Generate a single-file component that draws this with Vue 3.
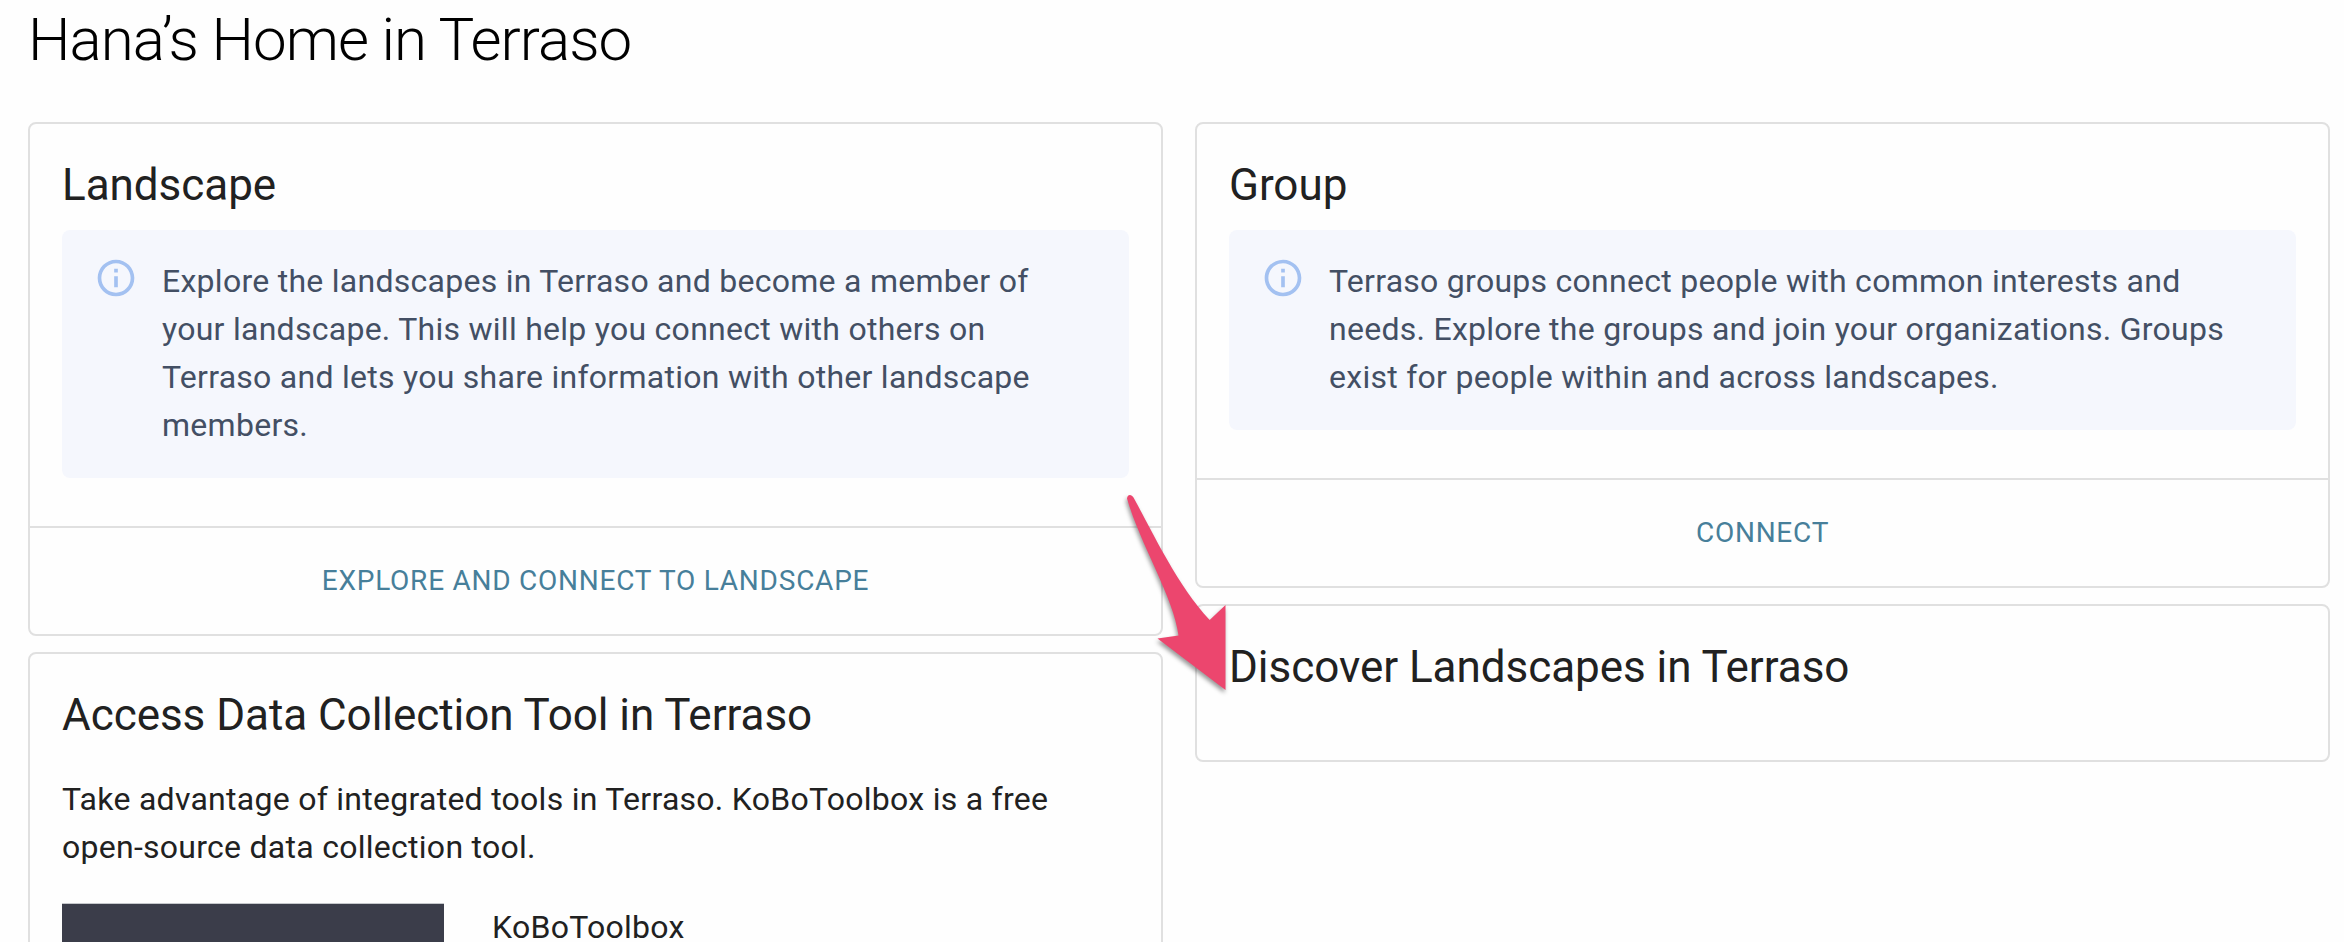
<script setup>
import { ref } from "vue";

const userName = ref("Hana");

const landscape = {
  title: "Landscape",
  message: "Explore the landscapes in Terraso and become a member of your landscape. This will help you connect with others on Terraso and lets you share information with other landscape members.",
  action: "Explore and connect to landscape"
};

const group = {
  title: "Group",
  message: "Terraso groups connect people with common interests and needs. Explore the groups and join your organizations. Groups exist for people within and across landscapes.",
  action: "Connect"
};
</script>

<template>
  <main class="home">
    <h1>{{ userName }}’s Home in Terraso</h1>
    <div class="columns">
      <div class="column">
        <section class="card">
          <h2>{{ landscape.title }}</h2>
          <div class="alert">
            <svg class="alert-icon" viewBox="0 0 24 24">
              <path d="M11 7h2v2h-2zm0 4h2v6h-2zm1-9C6.48 2 2 6.48 2 12s4.48 10 10 10 10-4.48 10-10S17.52 2 12 2m0 18c-4.41 0-8-3.59-8-8s3.59-8 8-8 8 3.59 8 8-3.59 8-8 8" />
            </svg>
            <p>{{ landscape.message }}</p>
          </div>
          <div class="card-actions">
            <a href="#" @click.prevent>{{ landscape.action }}</a>
          </div>
        </section>

        <section class="card tools">
          <h2>Access Data Collection Tool in Terraso</h2>
          <p class="description">Take advantage of integrated tools in Terraso. KoBoToolbox is a free open-source data collection tool.</p>
          <div class="tool">
            <div class="tool-image"></div>
            <div class="tool-name">KoBoToolbox</div>
          </div>
        </section>
      </div>

      <div class="column">
        <section class="card">
          <h2>{{ group.title }}</h2>
          <div class="alert">
            <svg class="alert-icon" viewBox="0 0 24 24">
              <path d="M11 7h2v2h-2zm0 4h2v6h-2zm1-9C6.48 2 2 6.48 2 12s4.48 10 10 10 10-4.48 10-10S17.52 2 12 2m0 18c-4.41 0-8-3.59-8-8s3.59-8 8-8 8 3.59 8 8-3.59 8-8 8" />
            </svg>
            <p>{{ group.message }}</p>
          </div>
          <div class="card-actions">
            <a href="#" @click.prevent>{{ group.action }}</a>
          </div>
        </section>

        <section class="card discover">
          <h2>Discover Landscapes in Terraso</h2>
        </section>
      </div>
    </div>

    <!-- pointer over the discover card -->
    <svg class="arrow" viewBox="0 0 200 230">
      <path d="M37 18.5C37.5 14 41.5 14 43.5 17.5C64 55 88 106 119.7 140L135.5 125V210L67.5 158.5L88.5 155.5C84 118 50 64 37 18.5Z" />
    </svg>
  </main>
</template>

<style>
body {
  margin: 0;
  background: #fefefe;
}
</style>

<style scoped>
.home {
  position: relative;
  box-sizing: border-box;
  width: 2344px;
  height: 942px;
  padding: 0 14px 0 28px;
  overflow: hidden;
  font-family: Roboto, "Liberation Sans", sans-serif;
  color: #212121;
}
h1 {
  margin: 0;
  height: 122px;
  font-size: 60px;
  font-weight: 300;
  line-height: 80px;
  letter-spacing: -0.97px;
  color: #000;
}
.columns {
  display: grid;
  grid-template-columns: 1135px 1135px;
  gap: 32px;
  align-items: start;
}
.column {
  display: flex;
  flex-direction: column;
  gap: 16px;
}
.card {
  box-sizing: border-box;
  border: 2px solid #e0e0e0;
  border-radius: 8px;
}
h2 {
  margin: 0;
  padding: 32px 32px 0;
  font-size: 44px;
  font-weight: 400;
  line-height: 58px;
  letter-spacing: -0.04px;
}
.alert {
  display: flex;
  margin: 16px 32px 48px;
  padding: 12px 32px;
  border-radius: 8px;
  background: #f5f7fd;
}
.alert-icon {
  flex: none;
  width: 44px;
  height: 44px;
  margin: 14px 24px 0 0;
  fill: #a3c1f1;
}
.alert p {
  margin: 0;
  padding: 15px 0 17px;
  font-size: 32px;
  line-height: 48px;
  letter-spacing: 0.27px;
  color: #434f64;
}
.card-actions {
  display: flex;
  align-items: center;
  justify-content: center;
  box-sizing: border-box;
  height: 108px;
  padding-bottom: 2px;
  border-top: 2px solid #e0e0e0;
}
.card-actions a {
  font-size: 28px;
  line-height: 49px;
  letter-spacing: 0.76px;
  text-transform: uppercase;
  text-decoration: none;
  color: #477f9a;
}
.tools {
  height: 460px;
}
.description {
  margin: 31px 32px 0;
  font-size: 32px;
  line-height: 48px;
  letter-spacing: 0.27px;
}
.tool {
  display: flex;
  gap: 48px;
  margin: 32px 32px 0;
}
.tool-image {
  box-sizing: border-box;
  width: 382px;
  height: 240px;
  border-top: 1px solid #c6c8cc;
  background: #3b3d4a;
}
.tool-name {
  font-size: 32px;
  line-height: 48px;
  letter-spacing: 0.27px;
}
.discover {
  height: 158px;
}
.arrow {
  position: absolute;
  left: 1090px;
  top: 480px;
  width: 200px;
  height: 230px;
  fill: #ec466e;
  filter: drop-shadow(-1px 3px 2px rgba(0, 0, 0, 0.4));
}
</style>
